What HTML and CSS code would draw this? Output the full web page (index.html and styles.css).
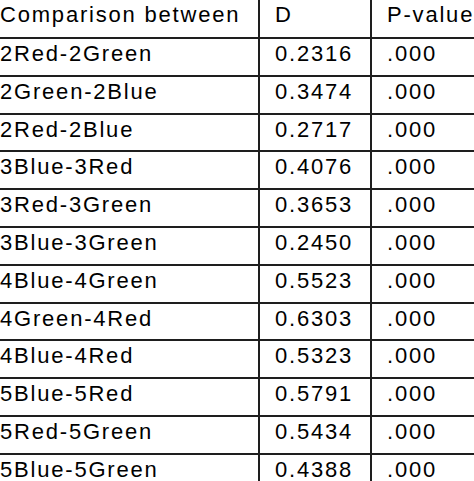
FILE: index.html
```html
<!DOCTYPE html>
<html>
<head>
<meta charset="utf-8">
<link rel="stylesheet" href="styles.css">
</head>
<body>
<div class="table">
  <div class="row head">
    <div class="cell c1">Comparison between</div>
    <div class="cell c2">D</div>
    <div class="cell c3">P-value</div>
  </div>
  <div class="row"><div class="cell c1">2Red-2Green</div><div class="cell c2">0.2316</div><div class="cell c3">.000</div></div>
  <div class="row"><div class="cell c1">2Green-2Blue</div><div class="cell c2">0.3474</div><div class="cell c3">.000</div></div>
  <div class="row"><div class="cell c1">2Red-2Blue</div><div class="cell c2">0.2717</div><div class="cell c3">.000</div></div>
  <div class="row"><div class="cell c1">3Blue-3Red</div><div class="cell c2">0.4076</div><div class="cell c3">.000</div></div>
  <div class="row"><div class="cell c1">3Red-3Green</div><div class="cell c2">0.3653</div><div class="cell c3">.000</div></div>
  <div class="row"><div class="cell c1">3Blue-3Green</div><div class="cell c2">0.2450</div><div class="cell c3">.000</div></div>
  <div class="row"><div class="cell c1">4Blue-4Green</div><div class="cell c2">0.5523</div><div class="cell c3">.000</div></div>
  <div class="row"><div class="cell c1">4Green-4Red</div><div class="cell c2">0.6303</div><div class="cell c3">.000</div></div>
  <div class="row"><div class="cell c1">4Blue-4Red</div><div class="cell c2">0.5323</div><div class="cell c3">.000</div></div>
  <div class="row"><div class="cell c1">5Blue-5Red</div><div class="cell c2">0.5791</div><div class="cell c3">.000</div></div>
  <div class="row"><div class="cell c1">5Red-5Green</div><div class="cell c2">0.5434</div><div class="cell c3">.000</div></div>
  <div class="row"><div class="cell c1">5Blue-5Green</div><div class="cell c2">0.4388</div><div class="cell c3">.000</div></div>
</div>
</body>
</html>
```
FILE: styles.css
```css
html, body {
  margin: 0;
  padding: 0;
  background: #ffffff;
  overflow: hidden;
}
body {
  width: 474px;
  height: 481px;
  font-family: "Liberation Sans", Arial, sans-serif;
  font-size: 22px;
  letter-spacing: 1.8px;
  color: #000;
}
.table {
  display: flex;
  flex-direction: column;
}
.row {
  display: grid;
  grid-template-columns: 260px 112px 1fr;
  height: 37.8px;
  box-sizing: border-box;
  border-bottom: 2px solid #1e1e1e;
  flex: none;
}
.row.head {
  height: 39px;
}
.cell {
  box-sizing: border-box;
  line-height: 30px;
  white-space: nowrap;
  overflow: hidden;
}
.c1 {
  padding-left: 0;
  border-right: 2px solid #1e1e1e;
}
.c2 {
  padding-left: 15px;
  border-right: 2px solid #1e1e1e;
}
.c3 {
  padding-left: 15px;
}
```
